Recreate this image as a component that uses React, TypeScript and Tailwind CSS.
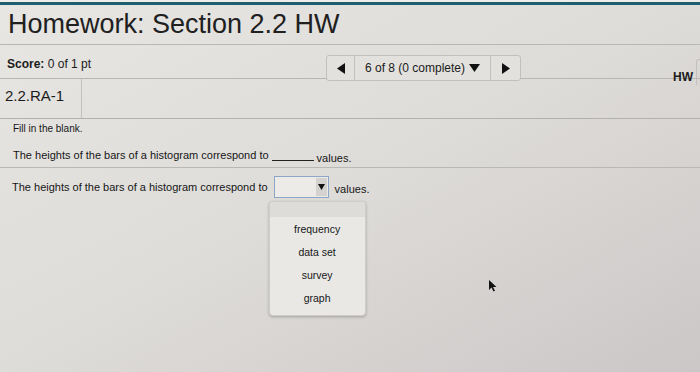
import { useState } from 'react'

const options = ['frequency', 'data set', 'survey', 'graph']

function Caret({ dir }: { dir: 'left' | 'right' | 'down' }) {
  if (dir === 'down') {
    return (
      <svg width="11" height="8" viewBox="0 0 11 8" className="inline-block">
        <path d="M0 0 L11 0 L5.5 8 Z" fill="#111" />
      </svg>
    )
  }
  return (
    <svg width="8" height="11" viewBox="0 0 8 11">
      {dir === 'left' ? <path d="M8 0 L8 11 L0 5.5 Z" fill="#111" /> : <path d="M0 0 L0 11 L8 5.5 Z" fill="#111" />}
    </svg>
  )
}

export default function App() {
  const [open] = useState(true)

  return (
    <div
      className="relative h-[372px] w-[700px] overflow-hidden bg-linear-to-br from-[#e7e6e2] via-[#dedcd9] to-[#cbc7c7] text-[#1b1b1b]"
      style={{ fontFamily: '"Liberation Sans", Arial, sans-serif' }}
    >
      {/* top accent */}
      <div className="h-[2px] bg-[#eeedea]" />
      <div className="h-[3px] bg-[#1d5f6e]" />

      {/* title */}
      <div className="flex h-[40px] items-center border-b border-[#b9b7b5] pl-[8px]">
        <h1 className="text-[27px] leading-none text-[#202020]">Homework: Section 2.2 HW</h1>
      </div>

      {/* score + nav */}
      <div className="flex h-[34px] items-start border-b border-[#b9b7b5]">
        <div className="w-[326px] pl-[7px] pt-[10px] text-[12px]">
          <span className="font-bold">Score:</span> 0 of 1 pt
        </div>
        <div className="mt-[10px] flex h-[26px] items-stretch rounded-[3px] border border-[#c2c0bd] bg-[#e2e1dd]">
          <div className="flex w-[28px] items-center justify-center border-r border-[#c2c0bd]">
            <Caret dir="left" />
          </div>
          <div className="flex w-[136px] items-center justify-center gap-[4px] border-r border-[#c2c0bd] text-[12px]">
            6 of 8 (0 complete) <Caret dir="down" />
          </div>
          <div className="flex w-[29px] items-center justify-center">
            <Caret dir="right" />
          </div>
        </div>
        <div className="ml-auto pr-[3px] pt-[23px] text-[12px] font-bold">HW</div>
        <div className="mt-[14px] h-[26px] w-[4px] rounded-tl-[3px] border-l border-t border-[#c2c0bd]" />
      </div>

      {/* problem id */}
      <div className="flex h-[40px] border-b border-[#b3b1af]">
        <div className="flex w-[82px] items-center border-r border-[#c4c2bf] pb-[4px] pl-[5px] text-[15px]">2.2.RA-1</div>
      </div>

      {/* question */}
      <div className="h-[49px] border-b border-[#bab8b5] px-[13px] text-[#161616]">
        <p className="pt-[2px] text-[10px] leading-[16px]">Fill in the blank.</p>
        <p className="mt-[11px] flex items-end text-[11px] leading-[14px]">
          <span>The heights of the bars of a histogram correspond to</span>
          <span className="mx-[3px] mb-[1px] inline-block w-[42px] border-b border-[#222]" />
          <span className="translate-y-[3px]">values.</span>
        </p>
      </div>

      <div className="flex items-center px-[12px] pt-[8px] text-[11px] text-[#161616]">
        <span>The heights of the bars of a histogram correspond to</span>
        <div className="relative mx-[6px]">
          <div className="flex h-[22px] w-[55px] items-center justify-end border border-[#8aa7c7] bg-[#ecebe8] pr-[1px]">
            <div className="flex h-[18px] w-[11px] items-center justify-center bg-[#d3d2cf]">
              <svg width="7" height="6" viewBox="0 0 7 6">
                <path d="M0 0 L7 0 L3.5 6 Z" fill="#111" />
              </svg>
            </div>
          </div>
          {open && (
            <div className="absolute left-[-5px] top-[25px] z-10 w-[97px] rounded-[4px] border border-[#cfcdca] bg-[#e9e8e5] shadow-[0_1px_3px_rgba(0,0,0,0.25)]">
              <div className="h-[15px] rounded-t-[4px] bg-[#dedcd9]" />
              <ul className="flex flex-col items-center gap-[9px] pb-[10px] pt-[5px] text-[10.5px]">
                {options.map(o => (
                  <li key={o} className="leading-[14px]">{o}</li>
                ))}
              </ul>
            </div>
          )}
        </div>
        <span className="translate-y-[2px]">values.</span>
      </div>

      {/* mouse pointer */}
      <svg className="absolute left-[489px] top-[280px]" width="9" height="12" viewBox="0 0 9 12">
        <path d="M0 0 L0 10 L2.5 7.5 L4.5 11.5 L6 10.8 L4 7 L7.5 7 Z" fill="#111" />
      </svg>
    </div>
  )
}
